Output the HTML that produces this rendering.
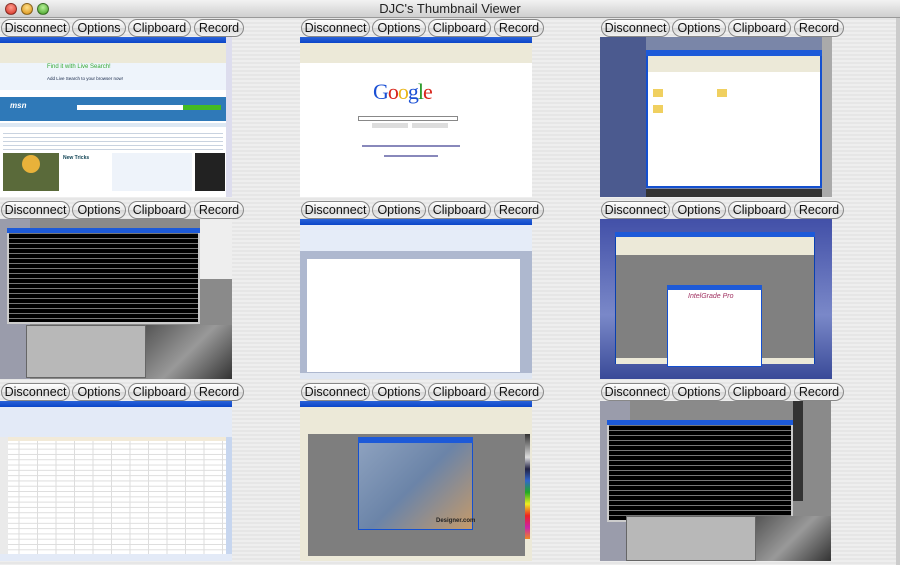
<!DOCTYPE html>
<html><head><meta charset="utf-8"><style>
*{margin:0;padding:0;box-sizing:border-box}
body{width:900px;height:565px;overflow:hidden;position:relative;font-family:"Liberation Sans",sans-serif;
background:repeating-linear-gradient(180deg,#eeeeee 0,#eeeeee 2px,#e6e6e6 2px,#e6e6e6 4px)}
.title{position:absolute;left:0;top:0;width:900px;height:18px;background:linear-gradient(#f2f2f2,#cfcfcf);border-bottom:1px solid #999;text-align:center;font-size:13px;line-height:18px;color:#222}
.dot{position:absolute;top:3px;width:12px;height:12px;border-radius:50%;border:1px solid rgba(0,0,0,.4)}
.a{position:absolute}
.btn{position:absolute;height:18px;border:1px solid #888;border-radius:9px;background:linear-gradient(#fff,#e8e8e8 50%,#d6d6d6 51%,#f2f2f2);font-size:12.5px;line-height:16px;text-align:center;color:#111}
.th{position:absolute;width:232px;height:160px;overflow:hidden}
.tb{position:absolute;left:0;top:0;right:0;height:6px;background:linear-gradient(#2a62d8,#0b46c8)}
.cmd{background:#000 repeating-linear-gradient(180deg,transparent 0,transparent 3px,#777 3px,#777 4px,transparent 4px,transparent 5px);background-size:100% 5px}
</style></head><body>
<div class="title">DJC's Thumbnail Viewer
<div class="dot" style="left:5px;background:radial-gradient(circle at 50% 35%,#ff9d8f,#d3291c)"></div>
<div class="dot" style="left:21px;background:radial-gradient(circle at 50% 35%,#ffe08a,#d68a0c)"></div>
<div class="dot" style="left:37px;background:radial-gradient(circle at 50% 35%,#b7f29a,#3c9b1c)"></div>
</div>

<div class="btn" style="left:1px;top:19px;width:69px">Disconnect</div><div class="btn" style="left:72px;top:19px;width:54px">Options</div><div class="btn" style="left:128px;top:19px;width:63px">Clipboard</div><div class="btn" style="left:194px;top:19px;width:50px">Record</div>
<div class="btn" style="left:301px;top:19px;width:69px">Disconnect</div><div class="btn" style="left:372px;top:19px;width:54px">Options</div><div class="btn" style="left:428px;top:19px;width:63px">Clipboard</div><div class="btn" style="left:494px;top:19px;width:50px">Record</div>
<div class="btn" style="left:601px;top:19px;width:69px">Disconnect</div><div class="btn" style="left:672px;top:19px;width:54px">Options</div><div class="btn" style="left:728px;top:19px;width:63px">Clipboard</div><div class="btn" style="left:794px;top:19px;width:50px">Record</div>
<div class="btn" style="left:1px;top:201px;width:69px">Disconnect</div><div class="btn" style="left:72px;top:201px;width:54px">Options</div><div class="btn" style="left:128px;top:201px;width:63px">Clipboard</div><div class="btn" style="left:194px;top:201px;width:50px">Record</div>
<div class="btn" style="left:301px;top:201px;width:69px">Disconnect</div><div class="btn" style="left:372px;top:201px;width:54px">Options</div><div class="btn" style="left:428px;top:201px;width:63px">Clipboard</div><div class="btn" style="left:494px;top:201px;width:50px">Record</div>
<div class="btn" style="left:601px;top:201px;width:69px">Disconnect</div><div class="btn" style="left:672px;top:201px;width:54px">Options</div><div class="btn" style="left:728px;top:201px;width:63px">Clipboard</div><div class="btn" style="left:794px;top:201px;width:50px">Record</div>
<div class="btn" style="left:1px;top:383px;width:69px">Disconnect</div><div class="btn" style="left:72px;top:383px;width:54px">Options</div><div class="btn" style="left:128px;top:383px;width:63px">Clipboard</div><div class="btn" style="left:194px;top:383px;width:50px">Record</div>
<div class="btn" style="left:301px;top:383px;width:69px">Disconnect</div><div class="btn" style="left:372px;top:383px;width:54px">Options</div><div class="btn" style="left:428px;top:383px;width:63px">Clipboard</div><div class="btn" style="left:494px;top:383px;width:50px">Record</div>
<div class="btn" style="left:601px;top:383px;width:69px">Disconnect</div><div class="btn" style="left:672px;top:383px;width:54px">Options</div><div class="btn" style="left:728px;top:383px;width:63px">Clipboard</div><div class="btn" style="left:794px;top:383px;width:50px">Record</div>

<!-- T1 MSN -->
<div class="th" style="left:0;top:37px;background:#fff">
<div class="tb"></div>
<div class="a" style="top:6px;left:0;right:0;height:20px;background:#ece9d8"></div>
<div class="a" style="top:26px;left:0;right:6px;height:27px;background:#eef4fb"></div>
<div class="a" style="top:27px;left:47px;font-size:6px;color:#3a3">Find it with Live Search!</div>
<div class="a" style="top:39px;left:47px;font-size:4.5px;color:#124">Add Live Search to your browser now!</div>
<div class="a" style="top:60px;left:0;right:6px;height:24px;background:#2f79b8"></div>
<div class="a" style="top:64px;left:10px;font-size:8px;color:#fff;font-style:italic;font-weight:bold">msn</div>
<div class="a" style="top:68px;left:77px;width:106px;height:5px;background:#fff"></div>
<div class="a" style="top:68px;left:183px;width:38px;height:5px;background:#4b2"></div>
<div class="a" style="top:86px;left:0;right:6px;height:4px;background:#dde8f3"></div>
<div class="a" style="top:93px;left:3px;width:220px;height:20px;background:repeating-linear-gradient(180deg,#fff 0,#fff 3px,#c9d3e0 3px,#c9d3e0 4px)"></div>
<div class="a" style="top:116px;left:3px;width:56px;height:38px;background:#5a6a3a"></div>
<div class="a" style="top:118px;left:22px;width:18px;height:18px;border-radius:50%;background:#e8b23a"></div>
<div class="a" style="top:118px;left:63px;font-size:5px;color:#145;font-weight:bold">New Tricks</div>
<div class="a" style="top:116px;left:112px;width:80px;height:38px;background:#eef3fa"></div>
<div class="a" style="top:116px;left:195px;width:30px;height:38px;background:#222"></div>
<div class="a" style="top:0;right:0;width:6px;height:160px;background:#dde"></div>
</div>
<!-- T2 Google -->
<div class="th" style="left:300px;top:37px;background:#fff">
<div class="tb"></div>
<div class="a" style="top:6px;left:0;right:0;height:20px;background:#ece9d8"></div>
<div class="a" style="top:42px;left:73px;font-size:22px;font-family:'Liberation Serif',serif;letter-spacing:-1px"><span style="color:#1a4fd4">G</span><span style="color:#d8261c">o</span><span style="color:#e9b71a">o</span><span style="color:#1a4fd4">g</span><span style="color:#2a9a2a">l</span><span style="color:#d8261c">e</span></div>
<div class="a" style="top:79px;left:58px;width:100px;height:5px;border:1px solid #888"></div>
<div class="a" style="top:86px;left:72px;width:36px;height:5px;background:#ddd"></div>
<div class="a" style="top:86px;left:112px;width:36px;height:5px;background:#ddd"></div>
<div class="a" style="top:108px;left:62px;width:98px;height:2px;background:#88b"></div>
<div class="a" style="top:118px;left:84px;width:54px;height:2px;background:#88b"></div>
</div>
<!-- T3 Desktop explorer -->
<div class="th" style="left:600px;top:37px;background:#7a86a8">
<div class="a" style="top:0;left:0;width:46px;height:160px;background:#4b5a8f"></div>
<div class="a" style="top:13px;left:46px;width:176px;height:138px;background:#fff;border:2px solid #1450d0"></div>
<div class="a" style="top:13px;left:46px;width:176px;height:6px;background:#1d5ad8"></div>
<div class="a" style="top:19px;left:48px;width:172px;height:16px;background:#ece9d8"></div>
<div class="a" style="top:52px;left:53px;width:10px;height:8px;background:#f0d060"></div>
<div class="a" style="top:52px;left:117px;width:10px;height:8px;background:#f0d060"></div>
<div class="a" style="top:68px;left:53px;width:10px;height:8px;background:#f0d060"></div>
<div class="a" style="top:152px;left:46px;width:186px;height:8px;background:#333"></div>
<div class="a" style="top:0;left:222px;width:10px;height:160px;background:#aaa"></div>
</div>
<!-- T4 CMD -->
<div class="th" style="left:0;top:219px;background:#8a8a8a">
<div class="a" style="top:0;left:0;width:30px;height:160px;background:#9a9cab"></div>
<div class="a cmd" style="top:9px;left:7px;width:193px;height:96px;border:2px solid #ccc"></div>
<div class="a" style="top:9px;left:7px;width:193px;height:5px;background:#1d5ad8"></div>
<div class="a" style="top:106px;left:26px;width:120px;height:53px;background:#b8b8b8;border:1px solid #666"></div>
<div class="a" style="top:106px;left:146px;width:86px;height:54px;background:linear-gradient(135deg,#555,#999,#333)"></div>
<div class="a" style="top:0;left:200px;width:32px;height:60px;background:#eee"></div>
</div>
<!-- T5 Word -->
<div class="th" style="left:300px;top:219px;background:#aeb8cf">
<div class="tb"></div>
<div class="a" style="top:6px;left:0;right:0;height:26px;background:#e5ecf8"></div>
<div class="a" style="top:40px;left:7px;width:213px;height:113px;background:#fff"></div>
<div class="a" style="top:154px;left:0;right:0;height:6px;background:#dfe6f2"></div>
</div>
<!-- T6 Intelligrade -->
<div class="th" style="left:600px;top:219px;background:linear-gradient(#4250a8,#7a88c8 60%,#3a4a98)">
<div class="a" style="top:13px;left:15px;width:200px;height:132px;background:#808080;border:1px solid #0a40b0"></div>
<div class="a" style="top:13px;left:15px;width:200px;height:5px;background:#1d5ad8"></div>
<div class="a" style="top:18px;left:16px;width:198px;height:18px;background:#ece9d8"></div>
<div class="a" style="top:139px;left:16px;width:198px;height:6px;background:#ece9d8"></div>
<div class="a" style="top:66px;left:67px;width:95px;height:82px;background:#fff;border:1px solid #1450d0"></div>
<div class="a" style="top:66px;left:67px;width:95px;height:5px;background:#1d5ad8"></div>
<div class="a" style="top:74px;left:88px;font-size:7px;color:#a03060;font-style:italic">IntelGrade Pro</div>
</div>
<!-- T7 Excel -->
<div class="th" style="left:0;top:401px;background:#fff;
background-image:linear-gradient(90deg,#ddd 1px,transparent 1px),linear-gradient(#ddd 1px,transparent 1px);background-size:18.5px 100%,100% 5.3px">
<div class="tb"></div>
<div class="a" style="top:6px;left:0;right:0;height:30px;background:#e3eaf7"></div>
<div class="a" style="top:36px;left:0;right:0;height:4px;background:#f2ead8"></div>
<div class="a" style="top:36px;left:0;width:8px;height:124px;background:#eaeaea"></div>
<div class="a" style="top:36px;right:0;width:6px;height:124px;background:#c7d6ef"></div>
<div class="a" style="top:153px;left:0;right:0;height:7px;background:#e3eaf7"></div>
</div>
<!-- T8 Corel -->
<div class="th" style="left:300px;top:401px;background:#ece9d8">
<div class="tb"></div>
<div class="a" style="top:33px;left:8px;width:217px;height:122px;background:#7e7e7e"></div>
<div class="a" style="top:33px;left:225px;width:5px;height:105px;background:linear-gradient(#333,#888,#ddd,#224,#36c,#2a2,#ee2,#e22,#c2a,#e82)"></div>
<div class="a" style="top:36px;left:58px;width:115px;height:93px;background:linear-gradient(135deg,#8fa3c0,#6b84a8,#c49a6a);border:1px solid #1450d0"></div>
<div class="a" style="top:36px;left:58px;width:115px;height:6px;background:#1d5ad8"></div>
<div class="a" style="top:117px;left:136px;font-size:6px;color:#222;font-weight:bold">Designer.com</div>
</div>
<!-- T9 CMD 2 -->
<div class="th" style="left:600px;top:401px;width:231px;background:#8a8a8a">
<div class="a" style="top:0;left:0;width:30px;height:160px;background:#9a9cab"></div>
<div class="a cmd" style="top:19px;left:7px;width:186px;height:102px;border:2px solid #ccc"></div>
<div class="a" style="top:19px;left:7px;width:186px;height:5px;background:#1d5ad8"></div>
<div class="a" style="top:115px;left:26px;width:130px;height:45px;background:#b8b8b8;border:1px solid #666"></div>
<div class="a" style="top:115px;left:156px;width:75px;height:45px;background:linear-gradient(135deg,#555,#999,#333)"></div>
<div class="a" style="top:0;left:193px;width:10px;height:100px;background:#333"></div>
</div>
<div class="a" style="left:896px;top:18px;width:4px;height:547px;background:#ccc"></div>
</body></html>
